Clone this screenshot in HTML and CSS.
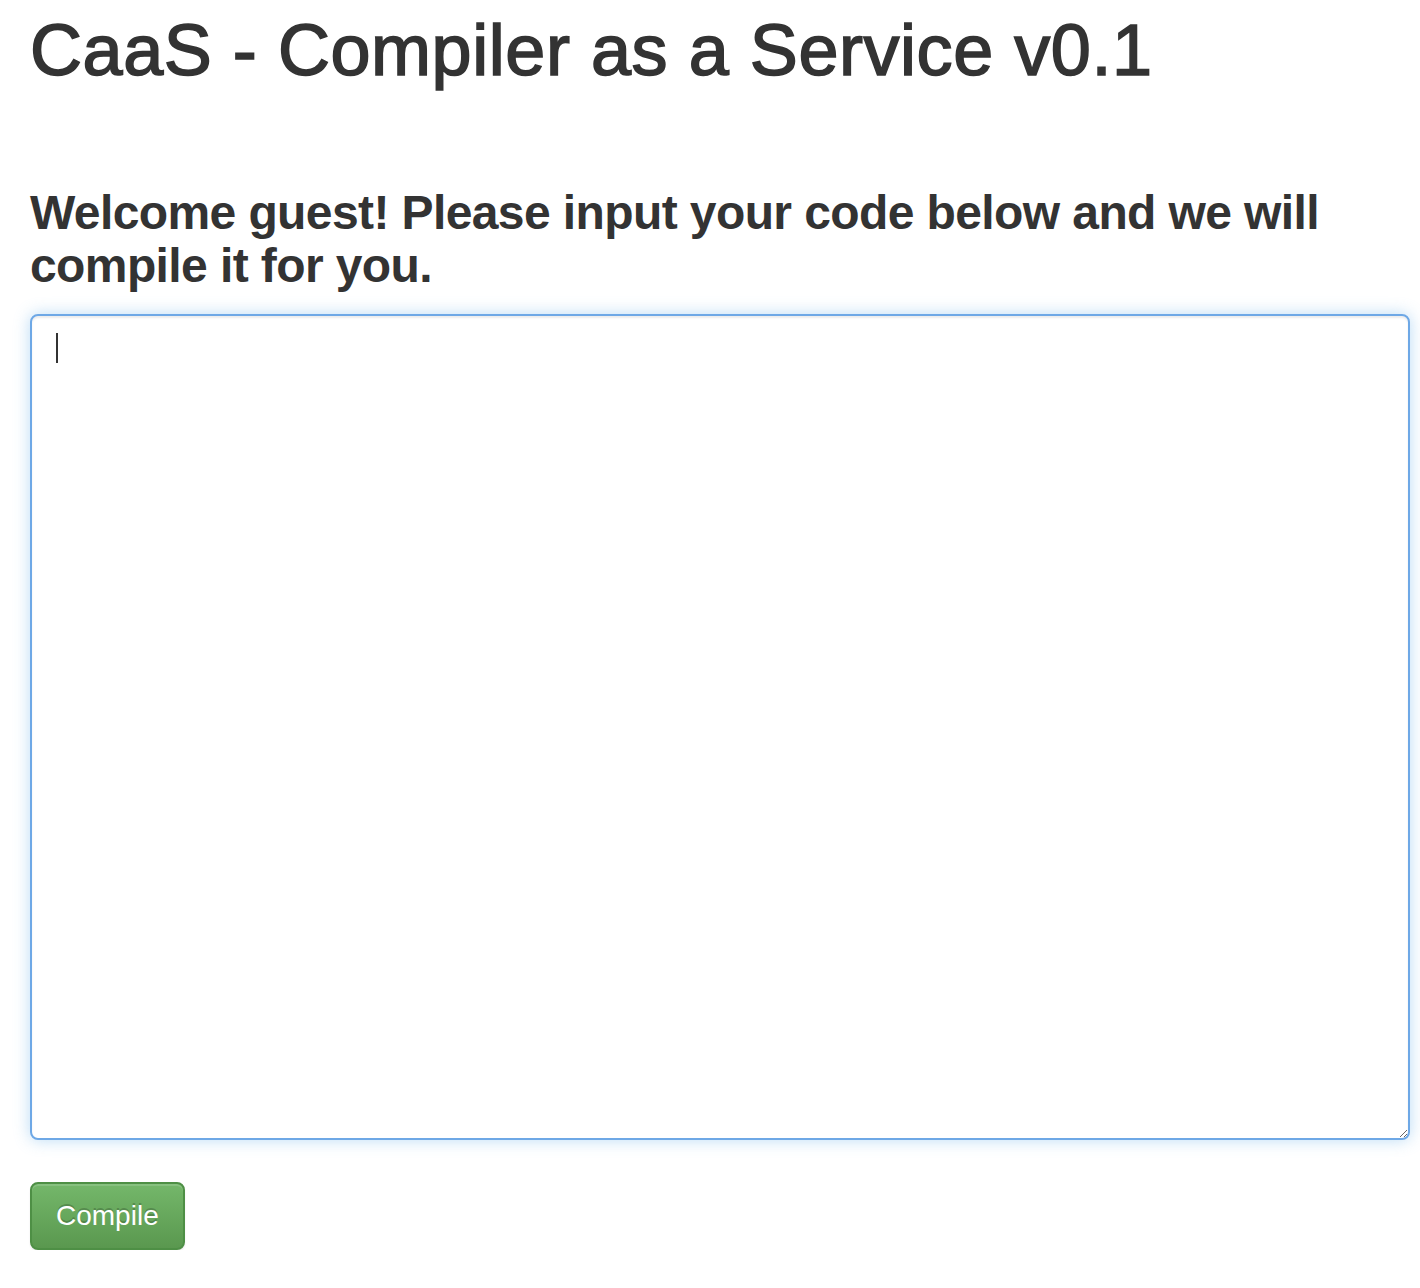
FILE: index.html
```html
<!DOCTYPE html>
<html lang="en">
<head>
<meta charset="utf-8">
<title>CaaS - Compiler as a Service v0.1</title>
<link rel="stylesheet" href="styles.css">
</head>
<body>
<div class="container">
  <h1 class="title">CaaS - Compiler as a Service v0.1</h1>
  <h3 class="welcome">Welcome guest! Please input your code below and we will compile it for you.</h3>
  <form class="compile-form">
    <div class="editor">
      <textarea class="code" spellcheck="false"></textarea>
      <span class="caret"></span>
    </div>
    <button type="button" class="btn-success">Compile</button>
  </form>
</div>
</body>
</html>
```
FILE: styles.css
```css
html, body {
  margin: 0;
  padding: 0;
  background: #fff;
}
body {
  font-family: "Liberation Sans", Arial, Helvetica, sans-serif;
  color: #333;
  font-size: 28px;
  line-height: 1.42857;
}
.container {
  padding: 11px 10px 0 30px;
}
.title {
  margin: 0;
  font-size: 72px;
  font-weight: 400;
  line-height: 1.1;
  letter-spacing: 0.55px;
  -webkit-text-stroke: 1.6px #333;
}
.welcome {
  margin: 97px 0 0;
  font-size: 48px;
  font-weight: 700;
  line-height: 1.1;
  letter-spacing: -0.6px;
}
.compile-form {
  margin-top: 21px;
  display: flex;
  flex-direction: column;
  align-items: flex-start;
}
.editor {
  position: relative;
  width: 100%;
}
.code {
  display: block;
  box-sizing: border-box;
  width: 100%;
  height: 826px;
  margin: 0;
  padding: 12px 24px;
  border: 2px solid #6ea8e6;
  border-radius: 8px;
  outline: none;
  font-family: "Liberation Sans", Arial, sans-serif;
  font-size: 28px;
  color: #555;
  background: #fff;
  box-shadow: inset 0 2px 2px rgba(0,0,0,.075), 0 0 16px rgba(102,175,233,.45);
}
.caret {
  position: absolute;
  left: 26px;
  top: 19px;
  width: 2px;
  height: 30px;
  background: #333;
}
.btn-success {
  margin-top: 42px;
  box-sizing: border-box;
  padding: 12px 24px;
  border: 2px solid #4e8f45;
  border-radius: 8px;
  font-family: "Liberation Sans", Arial, sans-serif;
  font-size: 28px;
  line-height: 40px;
  color: #fff;
  text-shadow: 0 -2px 0 rgba(0,0,0,.2);
  background-image: linear-gradient(to bottom, #74b76a 0%, #5a984f 100%);
  box-shadow: inset 0 2px 0 rgba(255,255,255,.15), 0 2px 2px rgba(0,0,0,.075);
  cursor: pointer;
}
```
